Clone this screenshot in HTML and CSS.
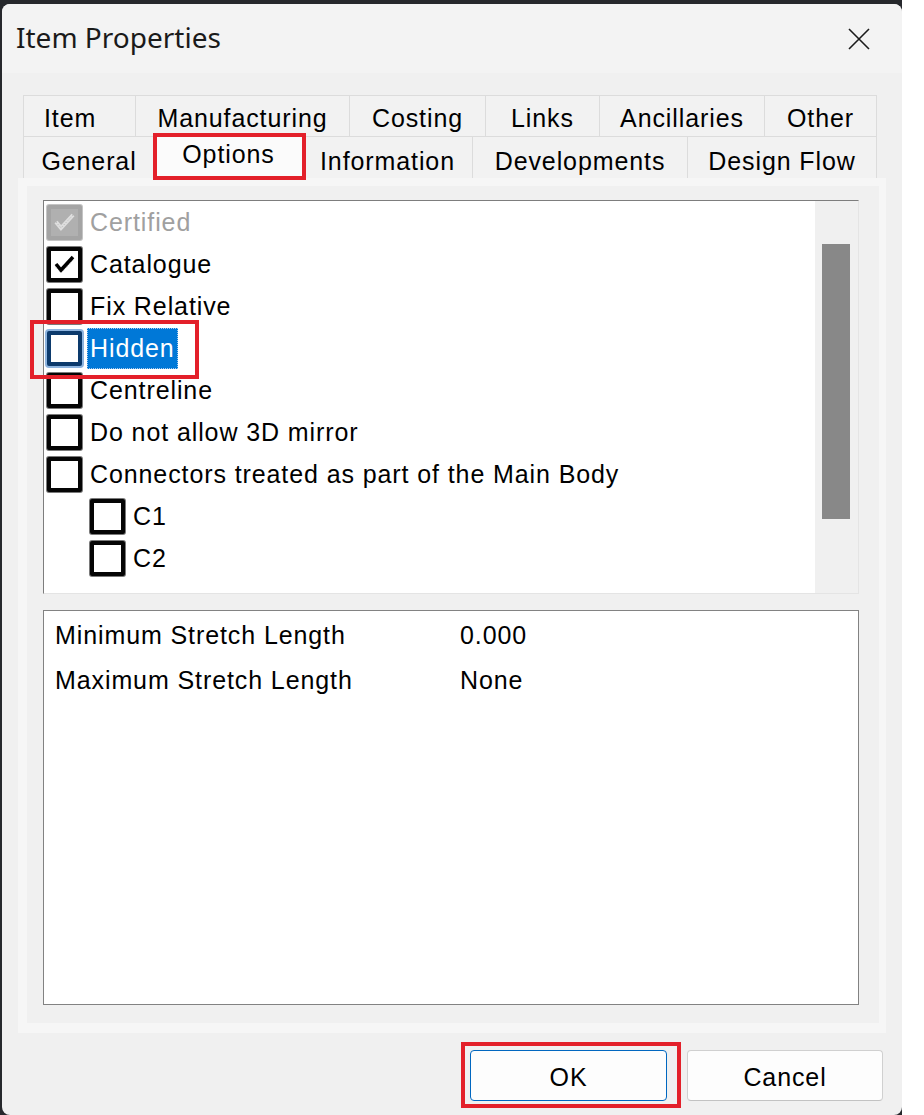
FILE: index.html
```html
<!DOCTYPE html>
<html lang="en">
<head>
<meta charset="utf-8">
<title>Item Properties</title>
<link rel="stylesheet" href="styles.css">
</head>
<body>
<div class="desktop">
  <div class="window">
    <div class="titlebar">
      <span class="title">Item Properties</span>
      <svg class="close" width="22" height="22" viewBox="0 0 22 22"><path d="M1 1L21 21M21 1L1 21" stroke="#1b1b1b" stroke-width="1.6" fill="none"/></svg>
    </div>
    <div class="main">
      <div class="tabs">
        <div class="tab-row row1">
          <div class="tab t-item"><span>Item</span></div>
          <div class="tab t-manu"><span>Manufacturing</span></div>
          <div class="tab t-cost"><span>Costing</span></div>
          <div class="tab t-links"><span>Links</span></div>
          <div class="tab t-anc"><span>Ancillaries</span></div>
          <div class="tab t-other"><span>Other</span></div>
        </div>
        <div class="tab-row row2">
          <div class="tab t-gen"><span>General</span></div>
          <div class="tab t-opt active"><span>Options</span></div>
          <div class="tab t-info"><span>Information</span></div>
          <div class="tab t-dev"><span>Developments</span></div>
          <div class="tab t-flow"><span>Design Flow</span></div>
        </div>
      </div>
      <div class="page">
        <div class="page-inner">
          <div class="listbox">
            <div class="items">
              <div class="row"><span class="cb cb-disabled"><svg width="27" height="27" viewBox="0 0 27 27"><polyline points="5,13 10,19 22,6" fill="none" stroke="#dedede" stroke-width="4"/><polyline points="5,13 10,19 22,6" fill="none" stroke="#b2b2b2" stroke-width="1" stroke-dasharray="1 2"/></svg></span><span class="lbl dim">Certified</span></div>
              <div class="row"><span class="cb"><svg width="27" height="27" viewBox="0 0 27 27"><polyline points="5,15 10,21 22,8" fill="none" stroke="#a8a8a8" stroke-width="2" stroke-dasharray="1 1"/><polyline points="5,13 10,19 22,6" fill="none" stroke="#000" stroke-width="3.5"/></svg></span><span class="lbl">Catalogue</span></div>
              <div class="row"><span class="cb"></span><span class="lbl">Fix Relative</span></div>
              <div class="row"><span class="cb cb-focus"></span><span class="lbl sel">Hidden</span></div>
              <div class="row"><span class="cb"></span><span class="lbl">Centreline</span></div>
              <div class="row"><span class="cb"></span><span class="lbl">Do not allow 3D mirror</span></div>
              <div class="row"><span class="cb"></span><span class="lbl">Connectors treated as part of the Main Body</span></div>
              <div class="row sub"><span class="cb"></span><span class="lbl">C1</span></div>
              <div class="row sub"><span class="cb"></span><span class="lbl">C2</span></div>
            </div>
            <div class="scrollbar"><div class="thumb"></div></div>
          </div>
          <div class="props">
            <div class="prop"><span class="pname">Minimum Stretch Length</span><span class="pval">0.000</span></div>
            <div class="prop"><span class="pname">Maximum Stretch Length</span><span class="pval">None</span></div>
          </div>
        </div>
      </div>
      <div class="buttons">
        <button class="btn btn-default">OK</button>
        <button class="btn btn-cancel">Cancel</button>
      </div>
    </div>
  </div>
  <div class="mark mark-options"></div>
  <div class="mark mark-hidden"></div>
  <div class="mark mark-ok"></div>
</div>
</body>
</html>
```

FILE: styles.css
```css
body {
  margin: 0;
  background: #ffffff;
  width: 924px;
  height: 1115px;
  overflow: hidden;
  font-family: "Liberation Sans", Arial, sans-serif;
  font-size: 25px;
  letter-spacing: 0.9px;
  color: #000;
}

.desktop {
  position: relative;
  box-sizing: border-box;
  width: 902px;
  height: 1115px;
  padding: 4px 0 0 2px;
  background: #26282c;
}

.window {
  width: 900px;
  height: 1111px;
  border-radius: 8px;
  background: #f0f0f0;
  overflow: hidden;
}

.titlebar {
  box-sizing: border-box;
  height: 69px;
  background: #f3f3f3;
  display: flex;
  align-items: center;
  justify-content: space-between;
  padding: 0 32px 3px 14px;
}

.title {
  font-family: "Noto Sans", sans-serif;
  font-size: 28px;
  letter-spacing: 0;
  line-height: 66px;
  color: #1a1a1a;
}

.close {
  margin-top: 3px;
}

.main {
  padding: 22px 0 0 16px;
}

.tabs {
  margin-left: 5px;
  width: 854px;
}

.tab-row {
  display: flex;
  align-items: flex-start;
}

.tab {
  box-sizing: border-box;
  flex: none;
  height: 41px;
  padding-top: 10px;
  border-top: 1px solid #dcdcdc;
  border-right: 1px solid #dcdcdc;
  background: #f2f2f2;
  text-align: center;
}

.tab:first-child {
  border-left: 1px solid #dcdcdc;
}

.tab span {
  display: block;
  line-height: 25px;
  white-space: nowrap;
}

.row2 .tab {
  height: 42px;
  padding-top: 12px;
}

.row2 .tab.active {
  height: 45px;
  margin-top: -3px;
  padding-top: 8px;
  background: #fbfbfb;
  border-top-color: #e2e2e2;
}

.t-item { width: 113px; text-align: left; padding-left: 20px; }
.t-manu { width: 214px; }
.t-cost { width: 136px; }
.t-links { width: 114px; }
.t-anc { width: 165px; }
.t-other { width: 112px; }
.t-gen { width: 132px; }
.t-opt { width: 148px; }
.t-info { width: 170px; }
.t-dev { width: 215px; }
.t-flow { width: 189px; }

.page {
  box-sizing: border-box;
  width: 868px;
  height: 855px;
  background: #f6f6f6;
  padding: 8px 7px 10px 9px;
}

.page-inner {
  box-sizing: border-box;
  height: 100%;
  background: #f0f0f0;
  padding: 14px 0 0 16px;
}

.listbox {
  box-sizing: border-box;
  width: 816px;
  height: 394px;
  background: #fff;
  border-top: 1px solid #7d7d7d;
  border-left: 1px solid #7d7d7d;
  border-right: 1px solid #e4e4e4;
  border-bottom: 1px solid #e4e4e4;
  display: flex;
}

.items {
  flex: 1;
}

.scrollbar {
  width: 43px;
  background: #f0f0f0;
}

.thumb {
  margin: 43px 8px 0 7px;
  height: 275px;
  background: #888888;
}

.row {
  height: 42px;
  display: flex;
  align-items: center;
  padding-left: 3px;
}

.row.sub {
  padding-left: 46px;
}

.cb {
  box-sizing: border-box;
  flex: none;
  width: 35px;
  height: 35px;
  border: 4px solid #050505;
  border-radius: 2px;
  box-shadow: 0 0 0 1px #7a7a7a;
  background: #fff;
  display: flex;
}

.cb-disabled {
  border-color: #a4a4a4;
  box-shadow: 0 0 0 1px #c4c4c4;
  background: #b0b0b0;
}

.cb-focus {
  border-color: #0c3a6c;
  box-shadow: 0 0 0 2px #8db4df;
}

.lbl {
  margin-left: 8px;
  line-height: 42px;
  white-space: nowrap;
}

.lbl.dim {
  color: #a0a0a0;
}

.lbl.sel {
  margin-left: 5px;
  padding: 0 3px;
  line-height: 41px;
  background: #0078d7;
  color: #fff;
  outline: 1px dotted #a9cdf0;
  outline-offset: -1px;
}

.props {
  box-sizing: border-box;
  margin-top: 16px;
  width: 816px;
  height: 395px;
  border: 1px solid #828282;
  background: #fff;
  padding: 2px 0 0 11px;
}

.prop {
  display: flex;
  line-height: 45px;
  white-space: nowrap;
}

.pname {
  width: 405px;
}

.buttons {
  display: flex;
  justify-content: flex-end;
  gap: 20px;
  margin-top: 17px;
  padding-right: 19px;
}

.btn {
  box-sizing: border-box;
  width: 197px;
  height: 51px;
  border: 1px solid #d0d0d0;
  border-bottom-color: #c2c2c2;
  border-radius: 4px;
  background: #fdfdfd;
  font: inherit;
  letter-spacing: inherit;
  color: #000;
  padding: 3px 0 0;
  line-height: 25px;
}

.btn-default {
  border-color: #0067c0;
}

.btn-cancel {
  width: 196px;
}

.mark {
  position: absolute;
  box-sizing: border-box;
  border: 4px solid #e3202a;
}

.mark-options { left: 153px; top: 133px; width: 153px; height: 47px; }
.mark-hidden { left: 30px; top: 320px; width: 169px; height: 59px; }
.mark-ok { left: 461px; top: 1042px; width: 220px; height: 66px; }
```
